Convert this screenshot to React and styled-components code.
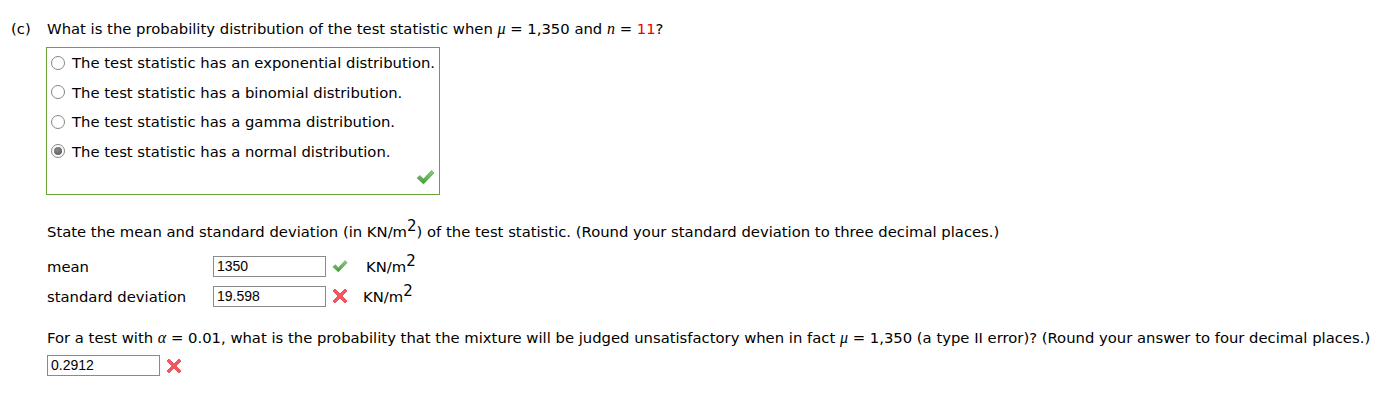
import React from "react";
import styled, { createGlobalStyle } from "styled-components";

const Global = createGlobalStyle`
  html, body {
    margin: 0;
    padding: 0;
    background: #fff;
  }
  body {
    font-family: Verdana, "DejaVu Sans", sans-serif;
    font-size: 14.8px;
    color: #000;
  }
`;

const Page = styled.div`
  padding: 20px 0 0 11px;
`;

const Part = styled.div`
  display: flex;
  flex-flow: row nowrap;
`;

const PartLabel = styled.div`
  width: 36px;
  flex: none;
  line-height: 18px;
`;

const Body = styled.div`
  display: flex;
  flex-flow: column nowrap;
  flex: 1;
`;

const Line = styled.div`
  line-height: 18px;
  white-space: nowrap;
`;

const Var = styled.i`
  font-family: "Liberation Serif", "Times New Roman", serif;
  font-size: 16px;
`;

const Red = styled.span`
  color: #e00;
`;

const Choices = styled.div`
  margin-top: 9px;
  width: 388px;
  height: 146px;
  border: 1px solid #6aa33a;
  padding: 0 0 0 4px;
  box-sizing: content-box;
  position: relative;
  margin-left: -1px;
`;

const Choice = styled.label`
  display: flex;
  flex-flow: row nowrap;
  align-items: center;
  height: 29.5px;
  gap: 7px;
`;

const Radio = styled.span`
  width: 14px;
  height: 14px;
  border-radius: 50%;
  border: 1px solid #858585;
  background: #fff;
  box-sizing: border-box;
  display: flex;
  align-items: center;
  justify-content: center;
  flex: none;
  &::after {
    content: "";
    display: ${(p) => (p.$checked ? "block" : "none")};
    width: 8px;
    height: 8px;
    border-radius: 50%;
    background: radial-gradient(circle at 40% 35%, #8a8a8a, #555);
  }
`;

const Corner = styled.div`
  position: absolute;
  right: 4px;
  bottom: 6px;
`;

const Section = styled.div`
  margin-top: ${(p) => p.$gap}px;
`;

const Grid = styled.div`
  display: grid;
  grid-template-columns: 166px auto 22px auto;
  grid-auto-rows: 30px;
  align-items: center;
  margin-top: 10px;
  justify-content: start;
`;

const Field = styled.div`
  width: 113px;
  height: 21px;
  border: 1px solid #8a8a8a;
  box-sizing: border-box;
  font-family: Arial, "Liberation Sans", sans-serif;
  font-size: 14px;
  line-height: 19px;
  padding-left: 3px;
  color: #000;
  background: #fff;
`;

const Mark = styled.div`
  display: flex;
  align-items: center;
  padding-left: ${(p) => p.$pad || 6}px;
`;

const Unit = styled.div`
  padding-left: ${(p) => p.$pad}px;
  white-space: nowrap;
`;

const Sup = styled.sup`
  font-size: 15px;
  line-height: 0;
`;

const AnswerRow = styled.div`
  display: flex;
  flex-flow: row nowrap;
  align-items: center;
  margin-top: 8px;
`;

const Check = () => (
  <svg width="19" height="16" viewBox="0 0 19 16">
    <defs>
      <linearGradient id="cg" x1="0" y1="0" x2="0" y2="1">
        <stop offset="0" stopColor="#8fd07a" />
        <stop offset="1" stopColor="#3f9a3a" />
      </linearGradient>
    </defs>
    <path
      d="M1 9 L4 6.5 L7.5 10 L15.5 1.5 L18 4 L7.5 15 Z"
      fill="url(#cg)"
      stroke="#4c9c42"
      strokeWidth="0.6"
      strokeLinejoin="round"
    />
  </svg>
);

const Cross = () => (
  <svg width="16" height="16" viewBox="0 0 16 16">
    <path
      d="M3 1 L8 6 L13 1 L15 3 L10 8 L15 13 L13 15 L8 10 L3 15 L1 13 L6 8 L1 3 Z"
      fill="#f2565f"
      stroke="#f2565f"
      strokeWidth="1"
      strokeLinejoin="round"
    />
  </svg>
);

const options = [
  "The test statistic has an exponential distribution.",
  "The test statistic has a binomial distribution.",
  "The test statistic has a gamma distribution.",
  "The test statistic has a normal distribution.",
];

const KN = () => (
  <>
    KN/m<Sup>2</Sup>
  </>
);

export default function App() {
  return (
    <>
      <Global />
      <Page>
        <Part>
          <PartLabel>(c)</PartLabel>
          <Body>
            <Line>
              What is the probability distribution of the test statistic when{" "}
              <Var>μ</Var> = 1,350 and <Var>n</Var> = <Red>11</Red>?
            </Line>
            <Choices>
              {options.map((o, i) => (
                <Choice key={o}>
                  <Radio $checked={i === 3} />
                  {o}
                </Choice>
              ))}
              <Corner>
                <Check />
              </Corner>
            </Choices>
            <Section $gap={28}>
              <Line>
                State the mean and standard deviation (in <KN />) of the test
                statistic. (Round your standard deviation to three decimal
                places.)
              </Line>
              <Grid>
                <div>mean</div>
                <Field>1350</Field>
                <Mark>
                  <Check />
                </Mark>
                <Unit $pad={18}>
                  <KN />
                </Unit>
                <div>standard deviation</div>
                <Field>19.598</Field>
                <Mark>
                  <Cross />
                </Mark>
                <Unit $pad={15}>
                  <KN />
                </Unit>
              </Grid>
            </Section>
            <Section $gap={18}>
              <Line>
                For a test with <Var>α</Var> = 0.01, what is the probability
                that the mixture will be judged unsatisfactory when in fact{" "}
                <Var>μ</Var> = 1,350 (a type II error)? (Round your answer to
                four decimal places.)
              </Line>
              <AnswerRow>
                <Field>0.2912</Field>
                <Mark>
                  <Cross />
                </Mark>
              </AnswerRow>
            </Section>
          </Body>
        </Part>
      </Page>
    </>
  );
}
